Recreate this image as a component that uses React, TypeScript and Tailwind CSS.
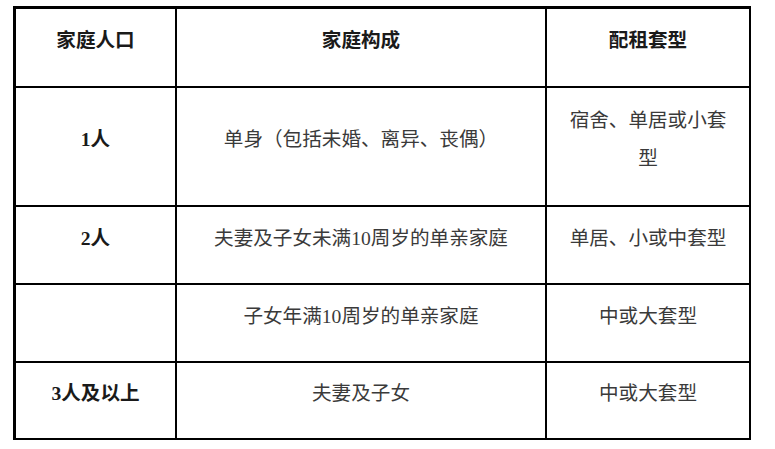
import React from "react";

const font = {
  fontFamily: '"Liberation Serif", "Noto Sans CJK SC", serif',
};

function Cell({ children, bold = false }: { children?: React.ReactNode; bold?: boolean }) {
  return (
    <div
      className={
        "bg-white flex items-center justify-center text-center px-4 pb-[13px] text-[19.6px] leading-[38px] " +
        (bold ? "font-bold text-[#1a1a1a]" : "font-normal text-[#3a3a3a]")
      }
    >
      {children}
    </div>
  );
}

export default function App() {
  return (
    <div className="w-[775px] h-[449px] bg-white pl-[13px] pt-[6px]" style={font}>
      <div className="grid w-[738px] grid-cols-[159px_368px_202px] grid-rows-[77px_117px_76px_76px_75px] gap-[2px] bg-black pt-[3px] pl-[3px] pr-[2px] pb-[2px]">
        <Cell bold>家庭人口</Cell>
        <Cell bold>家庭构成</Cell>
        <Cell bold>配租套型</Cell>

        <Cell bold>1人</Cell>
        <Cell>单身（包括未婚、离异、丧偶）</Cell>
        <Cell>宿舍、单居或小套型</Cell>

        <Cell bold>2人</Cell>
        <Cell>夫妻及子女未满10周岁的单亲家庭</Cell>
        <Cell>单居、小或中套型</Cell>

        <Cell></Cell>
        <Cell>子女年满10周岁的单亲家庭</Cell>
        <Cell>中或大套型</Cell>

        <Cell bold>3人及以上</Cell>
        <Cell>夫妻及子女</Cell>
        <Cell>中或大套型</Cell>
      </div>
    </div>
  );
}
